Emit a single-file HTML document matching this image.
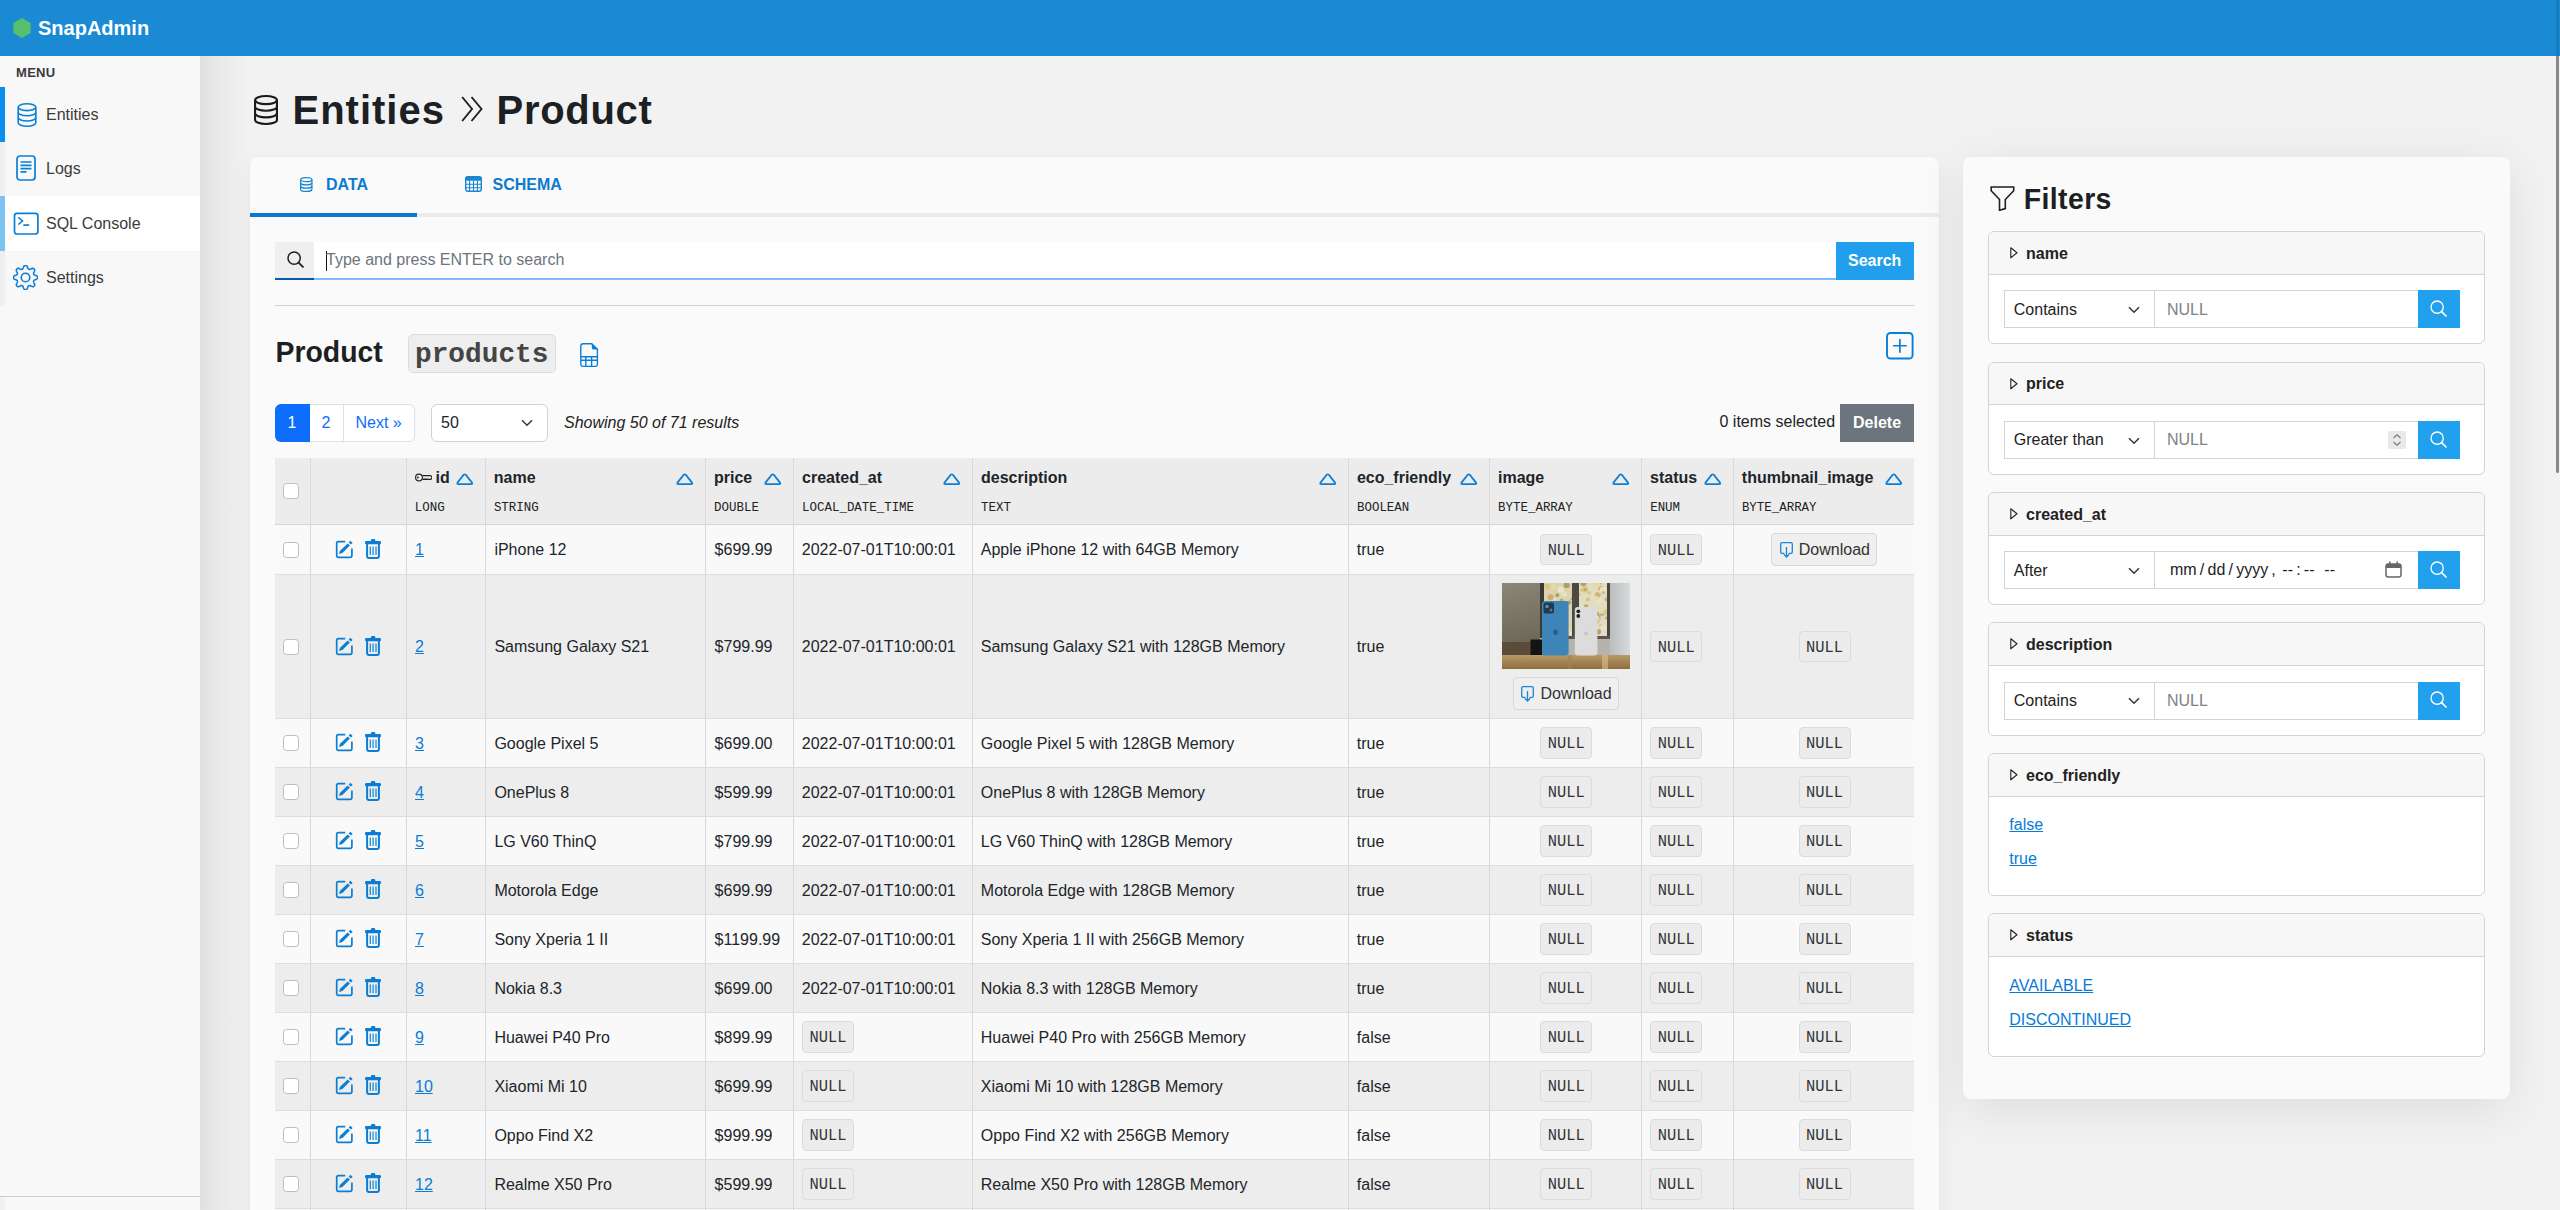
<!DOCTYPE html>
<html><head><meta charset="utf-8">
<style>
*{box-sizing:border-box;margin:0;padding:0}
html,body{width:2560px;height:1210px;overflow:hidden}
body{font-family:"Liberation Sans",sans-serif;font-size:16px;color:#212529;background:#f2f2f2;position:relative}
.abs{position:absolute}
svg{display:block}
.t{position:absolute;white-space:nowrap;line-height:20px}
#top{left:0;top:0;width:2560px;height:56px;background:#1a8ad4}
#logo-hex{left:13px;top:18px}
#logo-txt{left:38px;top:16px;color:#fff;font-weight:bold;font-size:20px;line-height:24px}
#side{left:0;top:56px;width:200px;height:1154px;background:#f8f8f8}
#menu{left:16px;top:9px;font-weight:bold;font-size:13px;color:#3a3a3a;letter-spacing:0.3px;line-height:15px}
.mi{position:absolute;left:0;width:200px;height:55px}
.mi .strip{position:absolute;left:0;top:0;width:5px;height:100%;background:#efefef}
.mi .lbl{position:absolute;left:46px;font-size:16px;color:#3b3b3b;line-height:20px}
.mi svg{position:absolute}
#shadowL{left:200px;top:56px;width:50px;height:1154px;background:linear-gradient(to right,#e0e0e0 0%,#e7e7e7 25%,#ebebeb 50%,#efefef 75%,#f2f2f2 100%)}
.card{position:absolute;background:#fafafa;border-radius:8px;box-shadow:0 0 2px rgba(0,0,0,0.05),0 8px 26px rgba(0,0,0,0.06)}
.blue{color:#0d7bd2}
.mono{font-family:"Liberation Mono",monospace}
.cell{position:absolute}
.badge{position:absolute;height:31.5px;border:1px solid #dcdcdc;border-radius:4px;background:#ececec;font-family:"Liberation Mono",monospace;font-size:15.4px;line-height:33.5px;color:#333;text-align:center}
.badge span{display:inline-block;transform:scaleY(1.1)}
.dl{position:absolute;height:33px;border:1px solid #d8d8d8;border-radius:4px;background:#efefef;font-size:16px;line-height:31px;color:#333}
.cb{position:absolute;width:16px;height:16px;border:1px solid #bdbdbd;border-radius:3.5px;background:#fff}
.fcard{position:absolute;left:25.6px;width:496px;border:1px solid #d6d6d6;border-radius:6px;background:#fff;overflow:hidden}
.fhead{position:absolute;left:0;top:0;width:100%;background:#f7f7f7;border-bottom:1px solid #d6d6d6}
.flbl{position:absolute;left:36px;font-weight:bold;font-size:16px;line-height:20px;color:#222}
.fsel{position:absolute;left:15px;width:151px;height:38px;border:1px solid #cfcfcf;background:#fff;font-size:16px;line-height:36px;padding-left:9px;color:#222}
.finp{position:absolute;left:165px;width:264px;height:38px;border:1px solid #cfcfcf;border-left:none;background:#fff;font-size:16px;line-height:36px;padding-left:12px;color:#7b8288}
.fbtn{position:absolute;left:429px;width:42px;height:38px;background:#1f9be8}
.flink{position:absolute;left:20px;font-size:16px;line-height:20px;color:#1a85d0;text-decoration:underline}
</style></head><body>
<div id="top" class="abs"></div>
<svg id="logo-hex" class="abs" width="18" height="20" viewBox="0 0 18 20"><path d="M9 0 L17.66 5 V15 L9 20 L0.34 15 V5 Z" fill="#55bf6a"/></svg>
<div id="logo-txt" class="abs">SnapAdmin</div>

<div id="shadowL" class="abs"></div>
<svg class="abs" style="left:254px;top:95px" width="24" height="30" viewBox="0 0 24 30"><g fill="none" stroke="#1b1b1b" stroke-width="2.1"><ellipse cx="12.0" cy="5.1000000000000005" rx="10.95" ry="4.050000000000001"/><path d="M1.05 5.1000000000000005V24.9A10.95 4.050000000000001 0 0 0 22.95 24.9V5.1000000000000005"/><path d="M1.05 11.7A10.95 4.050000000000001 0 0 0 22.95 11.7"/><path d="M1.05 18.299999999999997A10.95 4.050000000000001 0 0 0 22.95 18.299999999999997"/></g></svg>
<div class="t" style="left:292.50px;top:87.14px;font-size:40px;line-height:46px;font-weight:bold;color:#1c1f23;letter-spacing:1px">Entities</div>
<svg class="abs" style="left:461px;top:96px;" width="22" height="26" viewBox="0 0 22 26"><path d="M1.2 1 L11 13 L1.2 25 M10.5 1 L20.5 13 L10.5 25" fill="none" stroke="#1c1f23" stroke-width="1.9"/></svg>
<div class="t" style="left:496.50px;top:87.14px;font-size:40px;line-height:46px;font-weight:bold;color:#1c1f23;letter-spacing:0.7px">Product</div>
<div class="card" style="left:250px;top:157px;width:1689px;height:1100px"></div>
<div class="abs" style="left:250px;top:213px;width:1689px;height:4px;background:#ececec"></div>
<div class="abs" style="left:250px;top:213px;width:167px;height:4px;background:#0a78d0"></div>
<svg class="abs" style="left:300px;top:177px" width="12.5" height="15" viewBox="0 0 12.5 15"><g fill="none" stroke="#1a85d0" stroke-width="1.2"><ellipse cx="6.25" cy="2.6250000000000004" rx="5.65" ry="2.0250000000000004"/><path d="M0.6 2.6250000000000004V12.375A5.65 2.0250000000000004 0 0 0 11.9 12.375V2.6250000000000004"/><path d="M0.6 5.875A5.65 2.0250000000000004 0 0 0 11.9 5.875"/><path d="M0.6 9.125A5.65 2.0250000000000004 0 0 0 11.9 9.125"/></g></svg>
<div class="t" style="left:326.00px;top:174.76px;font-size:16px;line-height:20px;font-weight:bold;color:#0d7ad1">DATA</div>
<svg class="abs" style="left:464.5px;top:176px;" width="17" height="16" viewBox="0 0 17 16"><rect x="0.7" y="0.7" width="15.6" height="14.6" rx="2" fill="none" stroke="#1a85d0" stroke-width="1.4"/><rect x="0.7" y="0.7" width="15.6" height="4" rx="1.5" fill="#1a85d0"/><path d="M0.7 8.2H16.3M0.7 11.7H16.3M4.6 4.5V15.3M8.5 4.5V15.3M12.4 4.5V15.3" stroke="#1a85d0" stroke-width="1.1"/></svg>
<div class="t" style="left:492.50px;top:174.76px;font-size:16px;line-height:20px;font-weight:bold;color:#0d7ad1">SCHEMA</div>
<div class="abs" style="left:275px;top:242px;width:39px;height:38px;background:#efefef;border-bottom:2px solid #0b5aa8"></div>
<svg class="abs" style="left:286.5px;top:251px;" width="17" height="17" viewBox="0 0 17 17"><g fill="none" stroke="#222" stroke-width="1.5" stroke-linecap="round"><circle cx="7.14" cy="7.14" r="6.12"/><path d="M11.56 11.56L15.95 15.95" stroke-width="1.875"/></g></svg>
<div class="abs" style="left:314px;top:242px;width:1522px;height:38px;background:#fff;border-bottom:2px solid #86b7fe"></div>
<div class="abs" style="left:326px;top:251px;width:1px;height:20px;background:#111"></div>
<div class="t" style="left:326.00px;top:250.46px;font-size:16px;line-height:20px;color:#6c757d">Type and press ENTER to search</div>
<div class="abs" style="left:1836px;top:242px;width:78px;height:38px;background:#219fec"></div>
<div class="t" style="left:1848.00px;top:251.46px;font-size:16px;line-height:20px;color:#fff;font-weight:bold">Search</div>
<div class="abs" style="left:275px;top:305px;width:1639px;height:1px;background:#cfcfcf"></div>
<div class="t" style="left:275.50px;top:335.46px;font-size:28.4px;line-height:34px;font-weight:bold;color:#1c1f23;transform:scaleY(1.03);transform-origin:0 26.84px">Product</div>
<div class="abs" style="left:408px;top:334px;width:148px;height:38.5px;background:#eeeeee;border:1px solid #dcdcdc;border-radius:5px"></div>
<div class="t mono" style="left:415.00px;top:337.57px;font-size:27.8px;line-height:34px;font-weight:bold;color:#444">products</div>
<svg class="abs" style="left:580px;top:342.6px;" width="18.5" height="24.5" viewBox="0 0 18.5 24.5"><g fill="none" stroke="#0b7fd6" stroke-width="1.4"><path d="M3.2 0.8H11.8L17.4 6.4V21A2.4 2.4 0 0 1 15 23.4H3.2A2.4 2.4 0 0 1 0.8 21V3.2A2.4 2.4 0 0 1 3.2 0.8Z"/><path d="M0.8 13.7H17.4M0.8 17.2H17.4M5.8 13.7V23.4M11.6 13.7V23.4"/></g><path d="M11.8 0.8V4.7A1.7 1.7 0 0 0 13.5 6.4H17.4Z" fill="#0b7fd6"/></svg>
<svg class="abs" style="left:1886.3px;top:332.2px;" width="27.8" height="27.5" viewBox="0 0 27.8 27.5"><rect x="1" y="1" width="25.6" height="25.5" rx="3.5" fill="none" stroke="#0b7fd6" stroke-width="1.9"/><path d="M13.9 6.9V20.7M7 13.75H20.8" stroke="#0b7fd6" stroke-width="1.7"/></svg>
<div class="abs" style="left:275px;top:404px;width:140px;height:38px;border:1px solid #dee2e6;border-radius:6px;background:#fff"></div>
<div class="abs" style="left:275px;top:404px;width:35px;height:38px;border-radius:6px 0 0 6px;background:#0d6efd"></div>
<div class="abs" style="left:343px;top:404px;width:1px;height:38px;background:#dee2e6"></div>
<div class="t" style="left:287.50px;top:413.46px;font-size:16px;line-height:20px;color:#fff">1</div>
<div class="t" style="left:321.50px;top:413.46px;font-size:16px;line-height:20px;color:#0d6efd">2</div>
<div class="t" style="left:355.50px;top:413.46px;font-size:16px;line-height:20px;color:#0d6efd">Next »</div>
<div class="abs" style="left:431px;top:404px;width:117px;height:38px;border:1px solid #cfd3d7;border-radius:6px;background:#fff"></div>
<div class="t" style="left:441.00px;top:413.46px;font-size:16px;line-height:20px;">50</div>
<svg class="abs" style="left:521px;top:419.3px;" width="12" height="8" viewBox="0 0 12 8"><path d="M1 1.2L6 6.2L11 1.2" fill="none" stroke="#343a40" stroke-width="1.6"/></svg>
<div class="t" style="left:564.00px;top:413.46px;font-size:16px;line-height:20px;font-style:italic;color:#222">Showing 50 of 71 results</div>
<div class="t" style="left:1719.50px;top:411.96px;font-size:16px;line-height:20px;color:#222">0 items selected</div>
<div class="abs" style="left:1840px;top:404px;width:74px;height:38px;background:#6c757d"></div>
<div class="t" style="left:1853.00px;top:412.96px;font-size:16px;line-height:20px;color:#fff;font-weight:bold">Delete</div>
<div class="abs" style="left:275px;top:458px;width:1639px;height:67px;background:#ececec"></div>
<div class="abs" style="left:275px;top:525px;width:1639px;height:50px;background:#f9f9f9"></div>
<div class="abs" style="left:275px;top:575px;width:1639px;height:144px;background:#ededed"></div>
<div class="abs" style="left:275px;top:719px;width:1639px;height:49px;background:#f9f9f9"></div>
<div class="abs" style="left:275px;top:768px;width:1639px;height:49px;background:#ededed"></div>
<div class="abs" style="left:275px;top:817px;width:1639px;height:49px;background:#f9f9f9"></div>
<div class="abs" style="left:275px;top:866px;width:1639px;height:49px;background:#ededed"></div>
<div class="abs" style="left:275px;top:915px;width:1639px;height:49px;background:#f9f9f9"></div>
<div class="abs" style="left:275px;top:964px;width:1639px;height:49px;background:#ededed"></div>
<div class="abs" style="left:275px;top:1013px;width:1639px;height:49px;background:#f9f9f9"></div>
<div class="abs" style="left:275px;top:1062px;width:1639px;height:49px;background:#ededed"></div>
<div class="abs" style="left:275px;top:1111px;width:1639px;height:49px;background:#f9f9f9"></div>
<div class="abs" style="left:275px;top:1160px;width:1639px;height:49px;background:#ededed"></div>
<div class="abs" style="left:275px;top:1209px;width:1639px;height:49px;background:#f9f9f9"></div>
<div class="abs" style="left:275px;top:524px;width:1639px;height:1px;background:#d3d8dc"></div>
<div class="abs" style="left:275px;top:574px;width:1639px;height:1px;background:#dcdfe2"></div>
<div class="abs" style="left:275px;top:718px;width:1639px;height:1px;background:#dcdfe2"></div>
<div class="abs" style="left:275px;top:767px;width:1639px;height:1px;background:#dcdfe2"></div>
<div class="abs" style="left:275px;top:816px;width:1639px;height:1px;background:#dcdfe2"></div>
<div class="abs" style="left:275px;top:865px;width:1639px;height:1px;background:#dcdfe2"></div>
<div class="abs" style="left:275px;top:914px;width:1639px;height:1px;background:#dcdfe2"></div>
<div class="abs" style="left:275px;top:963px;width:1639px;height:1px;background:#dcdfe2"></div>
<div class="abs" style="left:275px;top:1012px;width:1639px;height:1px;background:#dcdfe2"></div>
<div class="abs" style="left:275px;top:1061px;width:1639px;height:1px;background:#dcdfe2"></div>
<div class="abs" style="left:275px;top:1110px;width:1639px;height:1px;background:#dcdfe2"></div>
<div class="abs" style="left:275px;top:1159px;width:1639px;height:1px;background:#dcdfe2"></div>
<div class="abs" style="left:275px;top:1208px;width:1639px;height:1px;background:#dcdfe2"></div>
<div class="abs" style="left:275px;top:1257px;width:1639px;height:1px;background:#dcdfe2"></div>
<div class="abs" style="left:309.9px;top:458px;width:1px;height:800px;background:#d9d9d9"></div>
<div class="abs" style="left:405.7px;top:458px;width:1px;height:800px;background:#d9d9d9"></div>
<div class="abs" style="left:484.8px;top:458px;width:1px;height:800px;background:#d9d9d9"></div>
<div class="abs" style="left:705.0px;top:458px;width:1px;height:800px;background:#d9d9d9"></div>
<div class="abs" style="left:793.0px;top:458px;width:1px;height:800px;background:#d9d9d9"></div>
<div class="abs" style="left:972.0px;top:458px;width:1px;height:800px;background:#d9d9d9"></div>
<div class="abs" style="left:1347.9px;top:458px;width:1px;height:800px;background:#d9d9d9"></div>
<div class="abs" style="left:1489.0px;top:458px;width:1px;height:800px;background:#d9d9d9"></div>
<div class="abs" style="left:1641.1px;top:458px;width:1px;height:800px;background:#d9d9d9"></div>
<div class="abs" style="left:1732.8px;top:458px;width:1px;height:800px;background:#d9d9d9"></div>
<div class="cb" style="left:283px;top:483px"></div>
<svg class="abs" style="left:415px;top:472.5px;" width="17" height="9" viewBox="0 0 17 9"><g fill="none" stroke="#222" stroke-width="1.15"><circle cx="4" cy="4.5" r="3.4"/><path d="M7.4 2.6H15A1.9 1.9 0 0 1 15 6.4H7.4"/></g><circle cx="2.9" cy="4.5" r="0.9" fill="#222"/><path d="M9 5.2V6.2M10.6 5.2V6.2M12.2 5.2V6.2" stroke="#222" stroke-width="0.6"/></svg>
<div class="t" style="left:435.50px;top:468.06px;font-size:16px;line-height:20px;font-weight:bold">id</div>
<svg class="abs" style="left:455.8px;top:473px;" width="17.5" height="12.5" viewBox="0 0 17.5 12.5"><path d="M7.6 1.9Q8.75 0.6 9.9 1.9L16 9.6Q16.8 11.1 15.2 11.1H2.3Q0.7 11.1 1.5 9.6Z" fill="none" stroke="#0b7fd6" stroke-width="1.7" stroke-linejoin="round"/></svg>
<div class="t mono" style="left:414.80px;top:497.69px;font-size:12.45px;line-height:20px;color:#222">LONG</div>
<div class="t" style="left:493.80px;top:468.06px;font-size:16px;line-height:20px;font-weight:bold">name</div>
<svg class="abs" style="left:676.0px;top:473px;" width="17.5" height="12.5" viewBox="0 0 17.5 12.5"><path d="M7.6 1.9Q8.75 0.6 9.9 1.9L16 9.6Q16.8 11.1 15.2 11.1H2.3Q0.7 11.1 1.5 9.6Z" fill="none" stroke="#0b7fd6" stroke-width="1.7" stroke-linejoin="round"/></svg>
<div class="t mono" style="left:493.90px;top:497.69px;font-size:12.45px;line-height:20px;color:#222">STRING</div>
<div class="t" style="left:714.00px;top:468.06px;font-size:16px;line-height:20px;font-weight:bold">price</div>
<svg class="abs" style="left:764.0px;top:473px;" width="17.5" height="12.5" viewBox="0 0 17.5 12.5"><path d="M7.6 1.9Q8.75 0.6 9.9 1.9L16 9.6Q16.8 11.1 15.2 11.1H2.3Q0.7 11.1 1.5 9.6Z" fill="none" stroke="#0b7fd6" stroke-width="1.7" stroke-linejoin="round"/></svg>
<div class="t mono" style="left:714.10px;top:497.69px;font-size:12.45px;line-height:20px;color:#222">DOUBLE</div>
<div class="t" style="left:802.00px;top:468.06px;font-size:16px;line-height:20px;font-weight:bold">created_at</div>
<svg class="abs" style="left:943.0px;top:473px;" width="17.5" height="12.5" viewBox="0 0 17.5 12.5"><path d="M7.6 1.9Q8.75 0.6 9.9 1.9L16 9.6Q16.8 11.1 15.2 11.1H2.3Q0.7 11.1 1.5 9.6Z" fill="none" stroke="#0b7fd6" stroke-width="1.7" stroke-linejoin="round"/></svg>
<div class="t mono" style="left:802.10px;top:497.69px;font-size:12.45px;line-height:20px;color:#222">LOCAL_DATE_TIME</div>
<div class="t" style="left:981.00px;top:468.06px;font-size:16px;line-height:20px;font-weight:bold">description</div>
<svg class="abs" style="left:1318.9px;top:473px;" width="17.5" height="12.5" viewBox="0 0 17.5 12.5"><path d="M7.6 1.9Q8.75 0.6 9.9 1.9L16 9.6Q16.8 11.1 15.2 11.1H2.3Q0.7 11.1 1.5 9.6Z" fill="none" stroke="#0b7fd6" stroke-width="1.7" stroke-linejoin="round"/></svg>
<div class="t mono" style="left:981.10px;top:497.69px;font-size:12.45px;line-height:20px;color:#222">TEXT</div>
<div class="t" style="left:1356.90px;top:468.06px;font-size:16px;line-height:20px;font-weight:bold">eco_friendly</div>
<svg class="abs" style="left:1460.0px;top:473px;" width="17.5" height="12.5" viewBox="0 0 17.5 12.5"><path d="M7.6 1.9Q8.75 0.6 9.9 1.9L16 9.6Q16.8 11.1 15.2 11.1H2.3Q0.7 11.1 1.5 9.6Z" fill="none" stroke="#0b7fd6" stroke-width="1.7" stroke-linejoin="round"/></svg>
<div class="t mono" style="left:1357.00px;top:497.69px;font-size:12.45px;line-height:20px;color:#222">BOOLEAN</div>
<div class="t" style="left:1498.00px;top:468.06px;font-size:16px;line-height:20px;font-weight:bold">image</div>
<svg class="abs" style="left:1612.1px;top:473px;" width="17.5" height="12.5" viewBox="0 0 17.5 12.5"><path d="M7.6 1.9Q8.75 0.6 9.9 1.9L16 9.6Q16.8 11.1 15.2 11.1H2.3Q0.7 11.1 1.5 9.6Z" fill="none" stroke="#0b7fd6" stroke-width="1.7" stroke-linejoin="round"/></svg>
<div class="t mono" style="left:1498.10px;top:497.69px;font-size:12.45px;line-height:20px;color:#222">BYTE_ARRAY</div>
<div class="t" style="left:1650.10px;top:468.06px;font-size:16px;line-height:20px;font-weight:bold">status</div>
<svg class="abs" style="left:1703.8px;top:473px;" width="17.5" height="12.5" viewBox="0 0 17.5 12.5"><path d="M7.6 1.9Q8.75 0.6 9.9 1.9L16 9.6Q16.8 11.1 15.2 11.1H2.3Q0.7 11.1 1.5 9.6Z" fill="none" stroke="#0b7fd6" stroke-width="1.7" stroke-linejoin="round"/></svg>
<div class="t mono" style="left:1650.20px;top:497.69px;font-size:12.45px;line-height:20px;color:#222">ENUM</div>
<div class="t" style="left:1741.80px;top:468.06px;font-size:16px;line-height:20px;font-weight:bold">thumbnail_image</div>
<svg class="abs" style="left:1884.5px;top:473px;" width="17.5" height="12.5" viewBox="0 0 17.5 12.5"><path d="M7.6 1.9Q8.75 0.6 9.9 1.9L16 9.6Q16.8 11.1 15.2 11.1H2.3Q0.7 11.1 1.5 9.6Z" fill="none" stroke="#0b7fd6" stroke-width="1.7" stroke-linejoin="round"/></svg>
<div class="t mono" style="left:1741.90px;top:497.69px;font-size:12.45px;line-height:20px;color:#222">BYTE_ARRAY</div>
<div class="cb" style="left:283px;top:541.5px"></div>
<svg class="abs" style="left:335px;top:539.9px;" width="19" height="19" viewBox="0 0 19 19"><path d="M10.2 1.6H3.4A1.7 1.7 0 0 0 1.7 3.3V15.6A1.7 1.7 0 0 0 3.4 17.3H15.2A1.7 1.7 0 0 0 16.9 15.6V8.4" fill="none" stroke="#0b7dd4" stroke-width="1.7"/><path d="M3.9 14.1L5 10.7L12.7 3.4L14.9 5.6L7.4 13Z" fill="#0b7dd4"/><path d="M13.7 2.4L15.4 0.7L17.6 2.9L15.9 4.6Z" fill="#0b7dd4"/></svg>
<svg class="abs" style="left:365px;top:538.9px;" width="16" height="20" viewBox="0 0 16 20"><g fill="#0b7dd4"><rect x="0" y="2.1" width="16" height="3.1" rx="1.2"/><rect x="5.9" y="0.1" width="4.4" height="2.8" rx="1.3"/></g><path d="M2.1 5V17A2 2 0 0 0 4.1 19H11.9A2 2 0 0 0 13.9 17V5" fill="none" stroke="#0b7dd4" stroke-width="2"/><path d="M5.3 7.6V15.9M8.1 7.6V15.9M11 7.6V15.9" stroke="#1a8edc" stroke-width="1.3"/></svg>
<div class="t" style="left:415.00px;top:539.66px;font-size:16px;line-height:20px;color:#0a7bd5;text-decoration:underline">1</div>
<div class="t" style="left:494.40px;top:539.66px;font-size:16px;line-height:20px;">iPhone 12</div>
<div class="t" style="left:714.60px;top:539.66px;font-size:16px;line-height:20px;">$699.99</div>
<div class="t" style="left:801.80px;top:539.66px;font-size:16px;line-height:20px;">2022-07-01T10:00:01</div>
<div class="t" style="left:980.80px;top:539.66px;font-size:16px;line-height:20px;">Apple iPhone 12 with 64GB Memory</div>
<div class="t" style="left:1356.80px;top:539.66px;font-size:16px;line-height:20px;">true</div>
<div class="badge" style="left:1540.2px;top:533.5px;width:52px"><span>NULL</span></div>
<div class="badge" style="left:1650.3px;top:533.5px;width:52px"><span>NULL</span></div>
<div class="dl" style="left:1771.3px;top:533.0px;width:105.5px"></div><svg class="abs" style="left:1779.6px;top:542.0px;" width="13" height="17" viewBox="0 0 13 17"><g fill="none" stroke="#1a85d0" stroke-width="1.3"><path d="M4.3 11.3H2A1.3 1.3 0 0 1 0.7 10V2A1.3 1.3 0 0 1 2 0.7H11A1.3 1.3 0 0 1 12.3 2V10A1.3 1.3 0 0 1 11 11.3H8.7"/><path d="M6.5 5V15M3.8 12.3L6.5 15L9.2 12.3"/></g></svg><div class="t" style="left:1798.80px;top:539.66px;font-size:16px;line-height:20px;color:#333">Download</div>
<div class="cb" style="left:283px;top:638.5px"></div>
<svg class="abs" style="left:335px;top:636.9px;" width="19" height="19" viewBox="0 0 19 19"><path d="M10.2 1.6H3.4A1.7 1.7 0 0 0 1.7 3.3V15.6A1.7 1.7 0 0 0 3.4 17.3H15.2A1.7 1.7 0 0 0 16.9 15.6V8.4" fill="none" stroke="#0b7dd4" stroke-width="1.7"/><path d="M3.9 14.1L5 10.7L12.7 3.4L14.9 5.6L7.4 13Z" fill="#0b7dd4"/><path d="M13.7 2.4L15.4 0.7L17.6 2.9L15.9 4.6Z" fill="#0b7dd4"/></svg>
<svg class="abs" style="left:365px;top:635.9px;" width="16" height="20" viewBox="0 0 16 20"><g fill="#0b7dd4"><rect x="0" y="2.1" width="16" height="3.1" rx="1.2"/><rect x="5.9" y="0.1" width="4.4" height="2.8" rx="1.3"/></g><path d="M2.1 5V17A2 2 0 0 0 4.1 19H11.9A2 2 0 0 0 13.9 17V5" fill="none" stroke="#0b7dd4" stroke-width="2"/><path d="M5.3 7.6V15.9M8.1 7.6V15.9M11 7.6V15.9" stroke="#1a8edc" stroke-width="1.3"/></svg>
<div class="t" style="left:415.00px;top:636.66px;font-size:16px;line-height:20px;color:#0a7bd5;text-decoration:underline">2</div>
<div class="t" style="left:494.40px;top:636.66px;font-size:16px;line-height:20px;">Samsung Galaxy S21</div>
<div class="t" style="left:714.60px;top:636.66px;font-size:16px;line-height:20px;">$799.99</div>
<div class="t" style="left:801.80px;top:636.66px;font-size:16px;line-height:20px;">2022-07-01T10:00:01</div>
<div class="t" style="left:980.80px;top:636.66px;font-size:16px;line-height:20px;">Samsung Galaxy S21 with 128GB Memory</div>
<div class="t" style="left:1356.80px;top:636.66px;font-size:16px;line-height:20px;">true</div>
<svg class="abs" style="left:1502px;top:583px;" width="128" height="86" viewBox="0 0 128 86">
<defs><linearGradient id="lw" x1="0" y1="0" x2="0.4" y2="1"><stop offset="0" stop-color="#8b8676"/><stop offset="1" stop-color="#5f584b"/></linearGradient>
<linearGradient id="tab" x1="0" y1="0" x2="0" y2="1"><stop offset="0" stop-color="#b89a68"/><stop offset="1" stop-color="#8e6c3e"/></linearGradient>
<linearGradient id="rw" x1="0" y1="0" x2="1" y2="0"><stop offset="0" stop-color="#b9bdbd"/><stop offset="1" stop-color="#d6dadc"/></linearGradient>
<clipPath id="p1"><rect x="42" y="0" width="28" height="53"/><rect x="77" y="0" width="28" height="53"/></clipPath></defs>
<rect width="128" height="86" fill="url(#lw)"/>
<rect x="38" y="0" width="70" height="72" fill="#b4b4ac"/>
<rect x="42" y="0" width="28" height="53" fill="#dcd3b0"/>
<rect x="77" y="0" width="28" height="53" fill="#e2dcc0"/>
<g clip-path="url(#p1)"><circle cx="58.6" cy="6.8" r="3.0" fill="#f2ecd8" opacity="0.75"/><circle cx="59.0" cy="47.3" r="2.1" fill="#9c8f52" opacity="0.75"/><circle cx="47.4" cy="37.3" r="2.3" fill="#9c8f52" opacity="0.75"/><circle cx="88.1" cy="44.8" r="1.7" fill="#c9a25a" opacity="0.75"/><circle cx="97.8" cy="34.9" r="1.3" fill="#e8d9a8" opacity="0.75"/><circle cx="98.8" cy="42.8" r="1.7" fill="#d8b46a" opacity="0.75"/><circle cx="88.1" cy="41.6" r="2.1" fill="#c9a25a" opacity="0.75"/><circle cx="79.7" cy="7.1" r="1.6" fill="#d8b46a" opacity="0.75"/><circle cx="88.8" cy="43.3" r="2.3" fill="#9c8f52" opacity="0.75"/><circle cx="93.4" cy="47.0" r="2.6" fill="#e8d9a8" opacity="0.75"/><circle cx="104.7" cy="34.9" r="1.5" fill="#a8a05a" opacity="0.75"/><circle cx="62.0" cy="11.0" r="2.9" fill="#e9e4cf" opacity="0.75"/><circle cx="80.5" cy="25.1" r="2.5" fill="#f2ecd8" opacity="0.75"/><circle cx="51.6" cy="3.5" r="3.0" fill="#e8d9a8" opacity="0.75"/><circle cx="89.0" cy="21.6" r="1.4" fill="#e8d9a8" opacity="0.75"/><circle cx="97.1" cy="17.2" r="3.0" fill="#e9e4cf" opacity="0.75"/><circle cx="70.0" cy="16.1" r="1.4" fill="#9c8f52" opacity="0.75"/><circle cx="68.6" cy="50.5" r="1.8" fill="#e9e4cf" opacity="0.75"/><circle cx="61.3" cy="51.0" r="1.9" fill="#a8a05a" opacity="0.75"/><circle cx="67.1" cy="19.6" r="2.1" fill="#9c8f52" opacity="0.75"/><circle cx="95.0" cy="31.0" r="2.3" fill="#9c8f52" opacity="0.75"/><circle cx="89.1" cy="37.5" r="1.7" fill="#e9e4cf" opacity="0.75"/><circle cx="104.4" cy="27.1" r="2.3" fill="#e8d9a8" opacity="0.75"/><circle cx="104.6" cy="16.4" r="2.0" fill="#c9a25a" opacity="0.75"/><circle cx="59.7" cy="17.3" r="1.9" fill="#a8a05a" opacity="0.75"/><circle cx="97.7" cy="1.2" r="1.3" fill="#e8d9a8" opacity="0.75"/><circle cx="84.0" cy="23.7" r="2.4" fill="#a8a05a" opacity="0.75"/><circle cx="52.2" cy="16.3" r="1.9" fill="#e9e4cf" opacity="0.75"/><circle cx="99.0" cy="5.5" r="2.8" fill="#c9a25a" opacity="0.75"/><circle cx="91.0" cy="34.0" r="1.7" fill="#a8a05a" opacity="0.75"/><circle cx="61.0" cy="33.8" r="1.4" fill="#a8a05a" opacity="0.75"/><circle cx="95.9" cy="11.7" r="2.8" fill="#c9a25a" opacity="0.75"/><circle cx="51.4" cy="33.8" r="3.0" fill="#f2ecd8" opacity="0.75"/><circle cx="83.3" cy="6.3" r="2.3" fill="#bfb27a" opacity="0.75"/><circle cx="99.6" cy="43.6" r="1.6" fill="#e9e4cf" opacity="0.75"/><circle cx="99.6" cy="33.4" r="2.8" fill="#a8a05a" opacity="0.75"/><circle cx="53.8" cy="27.0" r="2.9" fill="#f2ecd8" opacity="0.75"/><circle cx="94.8" cy="15.1" r="2.3" fill="#e8d9a8" opacity="0.75"/><circle cx="81.4" cy="0.2" r="3.1" fill="#9c8f52" opacity="0.75"/><circle cx="92.6" cy="51.3" r="2.6" fill="#e8d9a8" opacity="0.75"/><circle cx="100.4" cy="34.5" r="2.2" fill="#e9e4cf" opacity="0.75"/><circle cx="101.9" cy="44.8" r="2.9" fill="#e9e4cf" opacity="0.75"/><circle cx="64.7" cy="2.3" r="3.0" fill="#9c8f52" opacity="0.75"/><circle cx="67.1" cy="46.8" r="2.4" fill="#e8d9a8" opacity="0.75"/><circle cx="97.9" cy="8.9" r="1.8" fill="#e8d9a8" opacity="0.75"/><circle cx="78.5" cy="47.5" r="1.4" fill="#c9a25a" opacity="0.75"/><circle cx="104.2" cy="28.1" r="2.8" fill="#e8d9a8" opacity="0.75"/><circle cx="83.2" cy="6.4" r="3.0" fill="#d9c27a" opacity="0.75"/><circle cx="48.7" cy="14.2" r="3.0" fill="#c9a25a" opacity="0.75"/><circle cx="55.7" cy="29.7" r="2.0" fill="#e9e4cf" opacity="0.75"/><circle cx="49.5" cy="27.4" r="2.0" fill="#f2ecd8" opacity="0.75"/><circle cx="98.7" cy="0.1" r="1.3" fill="#c9a25a" opacity="0.75"/><circle cx="45.5" cy="3.6" r="3.1" fill="#d9c27a" opacity="0.75"/><circle cx="85.8" cy="16.4" r="1.9" fill="#d8b46a" opacity="0.75"/><circle cx="87.1" cy="9.9" r="1.9" fill="#d9c27a" opacity="0.75"/><circle cx="57.6" cy="37.2" r="2.0" fill="#d9c27a" opacity="0.75"/><circle cx="43.2" cy="24.0" r="2.5" fill="#9c8f52" opacity="0.75"/><circle cx="94.8" cy="2.3" r="3.0" fill="#e8d9a8" opacity="0.75"/><circle cx="94.6" cy="39.5" r="1.8" fill="#d8b46a" opacity="0.75"/><circle cx="77.5" cy="11.4" r="1.7" fill="#d9c27a" opacity="0.75"/><circle cx="83.3" cy="6.8" r="1.3" fill="#a8a05a" opacity="0.75"/><circle cx="104.1" cy="29.1" r="2.9" fill="#d9c27a" opacity="0.75"/><circle cx="96.3" cy="48.8" r="2.7" fill="#9c8f52" opacity="0.75"/><circle cx="95.7" cy="38.2" r="2.3" fill="#d9c27a" opacity="0.75"/><circle cx="55.3" cy="12.3" r="2.0" fill="#9c8f52" opacity="0.75"/><circle cx="57.8" cy="34.3" r="2.0" fill="#e8d9a8" opacity="0.75"/><circle cx="100.6" cy="6.3" r="2.9" fill="#f2ecd8" opacity="0.75"/><circle cx="93.2" cy="41.5" r="1.3" fill="#9c8f52" opacity="0.75"/><circle cx="45.0" cy="38.9" r="3.1" fill="#e8d9a8" opacity="0.75"/><circle cx="101.3" cy="9.4" r="1.4" fill="#c9a25a" opacity="0.75"/></g>
<rect x="38" y="0" width="4" height="55" fill="#3d3a36"/>
<rect x="70" y="0" width="7" height="55" fill="#4d4942"/>
<rect x="105" y="0" width="3" height="55" fill="#4a4640"/>
<rect x="40" y="53" width="68" height="3" fill="#595650"/>
<rect x="108" y="0" width="20" height="72" fill="url(#rw)"/>
<rect x="0" y="59" width="30" height="13" fill="#5b4b3b"/>
<rect x="28.5" y="56.5" width="12" height="16" fill="#141414"/>
<rect x="0" y="72" width="128" height="14" fill="url(#tab)"/>
<rect x="100" y="72" width="6" height="14" fill="#d8c28c" opacity="0.6"/>
<rect x="66" y="72" width="4" height="14" fill="#a0844f" opacity="0.6"/>
<rect x="40" y="18" width="26.6" height="54.4" rx="3" fill="#3d84b8"/>
<rect x="41.5" y="19.5" width="10.5" height="11" rx="2" fill="#1f3b52"/>
<circle cx="45" cy="23.5" r="1.7" fill="#6f8ea8"/><circle cx="49" cy="27" r="1.5" fill="#5a7a94"/>
<path d="M53.5 46.5c-1.3 0-2.3 1.3-2.3 2.8s1 2.8 2.3 2.8 2.3-1.3 2.3-2.8-1-2.8-2.3-2.8z" fill="#2a5e88"/>
<rect x="72.8" y="24" width="22.6" height="48.4" rx="3" fill="#dcdcdc"/>
<circle cx="76.3" cy="28.3" r="1.9" fill="#222"/><circle cx="76.3" cy="33" r="1.9" fill="#222"/>
<circle cx="84" cy="50.5" r="2" fill="#c8c8c8"/>
</svg>
<div class="dl" style="left:1513.0px;top:677.0px;width:105.5px"></div><svg class="abs" style="left:1521.3px;top:686.0px;" width="13" height="17" viewBox="0 0 13 17"><g fill="none" stroke="#1a85d0" stroke-width="1.3"><path d="M4.3 11.3H2A1.3 1.3 0 0 1 0.7 10V2A1.3 1.3 0 0 1 2 0.7H11A1.3 1.3 0 0 1 12.3 2V10A1.3 1.3 0 0 1 11 11.3H8.7"/><path d="M6.5 5V15M3.8 12.3L6.5 15L9.2 12.3"/></g></svg><div class="t" style="left:1540.50px;top:683.66px;font-size:16px;line-height:20px;color:#333">Download</div>
<div class="badge" style="left:1650.3px;top:630.5px;width:52px"><span>NULL</span></div>
<div class="badge" style="left:1798.5px;top:630.5px;width:52px"><span>NULL</span></div>
<div class="cb" style="left:283px;top:735.0px"></div>
<svg class="abs" style="left:335px;top:733.4px;" width="19" height="19" viewBox="0 0 19 19"><path d="M10.2 1.6H3.4A1.7 1.7 0 0 0 1.7 3.3V15.6A1.7 1.7 0 0 0 3.4 17.3H15.2A1.7 1.7 0 0 0 16.9 15.6V8.4" fill="none" stroke="#0b7dd4" stroke-width="1.7"/><path d="M3.9 14.1L5 10.7L12.7 3.4L14.9 5.6L7.4 13Z" fill="#0b7dd4"/><path d="M13.7 2.4L15.4 0.7L17.6 2.9L15.9 4.6Z" fill="#0b7dd4"/></svg>
<svg class="abs" style="left:365px;top:732.4px;" width="16" height="20" viewBox="0 0 16 20"><g fill="#0b7dd4"><rect x="0" y="2.1" width="16" height="3.1" rx="1.2"/><rect x="5.9" y="0.1" width="4.4" height="2.8" rx="1.3"/></g><path d="M2.1 5V17A2 2 0 0 0 4.1 19H11.9A2 2 0 0 0 13.9 17V5" fill="none" stroke="#0b7dd4" stroke-width="2"/><path d="M5.3 7.6V15.9M8.1 7.6V15.9M11 7.6V15.9" stroke="#1a8edc" stroke-width="1.3"/></svg>
<div class="t" style="left:415.00px;top:734.16px;font-size:16px;line-height:20px;color:#0a7bd5;text-decoration:underline">3</div>
<div class="t" style="left:494.40px;top:734.16px;font-size:16px;line-height:20px;">Google Pixel 5</div>
<div class="t" style="left:714.60px;top:734.16px;font-size:16px;line-height:20px;">$699.00</div>
<div class="t" style="left:801.80px;top:734.16px;font-size:16px;line-height:20px;">2022-07-01T10:00:01</div>
<div class="t" style="left:980.80px;top:734.16px;font-size:16px;line-height:20px;">Google Pixel 5 with 128GB Memory</div>
<div class="t" style="left:1356.80px;top:734.16px;font-size:16px;line-height:20px;">true</div>
<div class="badge" style="left:1540.2px;top:727.0px;width:52px"><span>NULL</span></div>
<div class="badge" style="left:1650.3px;top:727.0px;width:52px"><span>NULL</span></div>
<div class="badge" style="left:1798.5px;top:727.0px;width:52px"><span>NULL</span></div>
<div class="cb" style="left:283px;top:784.0px"></div>
<svg class="abs" style="left:335px;top:782.4px;" width="19" height="19" viewBox="0 0 19 19"><path d="M10.2 1.6H3.4A1.7 1.7 0 0 0 1.7 3.3V15.6A1.7 1.7 0 0 0 3.4 17.3H15.2A1.7 1.7 0 0 0 16.9 15.6V8.4" fill="none" stroke="#0b7dd4" stroke-width="1.7"/><path d="M3.9 14.1L5 10.7L12.7 3.4L14.9 5.6L7.4 13Z" fill="#0b7dd4"/><path d="M13.7 2.4L15.4 0.7L17.6 2.9L15.9 4.6Z" fill="#0b7dd4"/></svg>
<svg class="abs" style="left:365px;top:781.4px;" width="16" height="20" viewBox="0 0 16 20"><g fill="#0b7dd4"><rect x="0" y="2.1" width="16" height="3.1" rx="1.2"/><rect x="5.9" y="0.1" width="4.4" height="2.8" rx="1.3"/></g><path d="M2.1 5V17A2 2 0 0 0 4.1 19H11.9A2 2 0 0 0 13.9 17V5" fill="none" stroke="#0b7dd4" stroke-width="2"/><path d="M5.3 7.6V15.9M8.1 7.6V15.9M11 7.6V15.9" stroke="#1a8edc" stroke-width="1.3"/></svg>
<div class="t" style="left:415.00px;top:783.16px;font-size:16px;line-height:20px;color:#0a7bd5;text-decoration:underline">4</div>
<div class="t" style="left:494.40px;top:783.16px;font-size:16px;line-height:20px;">OnePlus 8</div>
<div class="t" style="left:714.60px;top:783.16px;font-size:16px;line-height:20px;">$599.99</div>
<div class="t" style="left:801.80px;top:783.16px;font-size:16px;line-height:20px;">2022-07-01T10:00:01</div>
<div class="t" style="left:980.80px;top:783.16px;font-size:16px;line-height:20px;">OnePlus 8 with 128GB Memory</div>
<div class="t" style="left:1356.80px;top:783.16px;font-size:16px;line-height:20px;">true</div>
<div class="badge" style="left:1540.2px;top:776.0px;width:52px"><span>NULL</span></div>
<div class="badge" style="left:1650.3px;top:776.0px;width:52px"><span>NULL</span></div>
<div class="badge" style="left:1798.5px;top:776.0px;width:52px"><span>NULL</span></div>
<div class="cb" style="left:283px;top:833.0px"></div>
<svg class="abs" style="left:335px;top:831.4px;" width="19" height="19" viewBox="0 0 19 19"><path d="M10.2 1.6H3.4A1.7 1.7 0 0 0 1.7 3.3V15.6A1.7 1.7 0 0 0 3.4 17.3H15.2A1.7 1.7 0 0 0 16.9 15.6V8.4" fill="none" stroke="#0b7dd4" stroke-width="1.7"/><path d="M3.9 14.1L5 10.7L12.7 3.4L14.9 5.6L7.4 13Z" fill="#0b7dd4"/><path d="M13.7 2.4L15.4 0.7L17.6 2.9L15.9 4.6Z" fill="#0b7dd4"/></svg>
<svg class="abs" style="left:365px;top:830.4px;" width="16" height="20" viewBox="0 0 16 20"><g fill="#0b7dd4"><rect x="0" y="2.1" width="16" height="3.1" rx="1.2"/><rect x="5.9" y="0.1" width="4.4" height="2.8" rx="1.3"/></g><path d="M2.1 5V17A2 2 0 0 0 4.1 19H11.9A2 2 0 0 0 13.9 17V5" fill="none" stroke="#0b7dd4" stroke-width="2"/><path d="M5.3 7.6V15.9M8.1 7.6V15.9M11 7.6V15.9" stroke="#1a8edc" stroke-width="1.3"/></svg>
<div class="t" style="left:415.00px;top:832.16px;font-size:16px;line-height:20px;color:#0a7bd5;text-decoration:underline">5</div>
<div class="t" style="left:494.40px;top:832.16px;font-size:16px;line-height:20px;">LG V60 ThinQ</div>
<div class="t" style="left:714.60px;top:832.16px;font-size:16px;line-height:20px;">$799.99</div>
<div class="t" style="left:801.80px;top:832.16px;font-size:16px;line-height:20px;">2022-07-01T10:00:01</div>
<div class="t" style="left:980.80px;top:832.16px;font-size:16px;line-height:20px;">LG V60 ThinQ with 128GB Memory</div>
<div class="t" style="left:1356.80px;top:832.16px;font-size:16px;line-height:20px;">true</div>
<div class="badge" style="left:1540.2px;top:825.0px;width:52px"><span>NULL</span></div>
<div class="badge" style="left:1650.3px;top:825.0px;width:52px"><span>NULL</span></div>
<div class="badge" style="left:1798.5px;top:825.0px;width:52px"><span>NULL</span></div>
<div class="cb" style="left:283px;top:882.0px"></div>
<svg class="abs" style="left:335px;top:880.4px;" width="19" height="19" viewBox="0 0 19 19"><path d="M10.2 1.6H3.4A1.7 1.7 0 0 0 1.7 3.3V15.6A1.7 1.7 0 0 0 3.4 17.3H15.2A1.7 1.7 0 0 0 16.9 15.6V8.4" fill="none" stroke="#0b7dd4" stroke-width="1.7"/><path d="M3.9 14.1L5 10.7L12.7 3.4L14.9 5.6L7.4 13Z" fill="#0b7dd4"/><path d="M13.7 2.4L15.4 0.7L17.6 2.9L15.9 4.6Z" fill="#0b7dd4"/></svg>
<svg class="abs" style="left:365px;top:879.4px;" width="16" height="20" viewBox="0 0 16 20"><g fill="#0b7dd4"><rect x="0" y="2.1" width="16" height="3.1" rx="1.2"/><rect x="5.9" y="0.1" width="4.4" height="2.8" rx="1.3"/></g><path d="M2.1 5V17A2 2 0 0 0 4.1 19H11.9A2 2 0 0 0 13.9 17V5" fill="none" stroke="#0b7dd4" stroke-width="2"/><path d="M5.3 7.6V15.9M8.1 7.6V15.9M11 7.6V15.9" stroke="#1a8edc" stroke-width="1.3"/></svg>
<div class="t" style="left:415.00px;top:881.16px;font-size:16px;line-height:20px;color:#0a7bd5;text-decoration:underline">6</div>
<div class="t" style="left:494.40px;top:881.16px;font-size:16px;line-height:20px;">Motorola Edge</div>
<div class="t" style="left:714.60px;top:881.16px;font-size:16px;line-height:20px;">$699.99</div>
<div class="t" style="left:801.80px;top:881.16px;font-size:16px;line-height:20px;">2022-07-01T10:00:01</div>
<div class="t" style="left:980.80px;top:881.16px;font-size:16px;line-height:20px;">Motorola Edge with 128GB Memory</div>
<div class="t" style="left:1356.80px;top:881.16px;font-size:16px;line-height:20px;">true</div>
<div class="badge" style="left:1540.2px;top:874.0px;width:52px"><span>NULL</span></div>
<div class="badge" style="left:1650.3px;top:874.0px;width:52px"><span>NULL</span></div>
<div class="badge" style="left:1798.5px;top:874.0px;width:52px"><span>NULL</span></div>
<div class="cb" style="left:283px;top:931.0px"></div>
<svg class="abs" style="left:335px;top:929.4px;" width="19" height="19" viewBox="0 0 19 19"><path d="M10.2 1.6H3.4A1.7 1.7 0 0 0 1.7 3.3V15.6A1.7 1.7 0 0 0 3.4 17.3H15.2A1.7 1.7 0 0 0 16.9 15.6V8.4" fill="none" stroke="#0b7dd4" stroke-width="1.7"/><path d="M3.9 14.1L5 10.7L12.7 3.4L14.9 5.6L7.4 13Z" fill="#0b7dd4"/><path d="M13.7 2.4L15.4 0.7L17.6 2.9L15.9 4.6Z" fill="#0b7dd4"/></svg>
<svg class="abs" style="left:365px;top:928.4px;" width="16" height="20" viewBox="0 0 16 20"><g fill="#0b7dd4"><rect x="0" y="2.1" width="16" height="3.1" rx="1.2"/><rect x="5.9" y="0.1" width="4.4" height="2.8" rx="1.3"/></g><path d="M2.1 5V17A2 2 0 0 0 4.1 19H11.9A2 2 0 0 0 13.9 17V5" fill="none" stroke="#0b7dd4" stroke-width="2"/><path d="M5.3 7.6V15.9M8.1 7.6V15.9M11 7.6V15.9" stroke="#1a8edc" stroke-width="1.3"/></svg>
<div class="t" style="left:415.00px;top:930.16px;font-size:16px;line-height:20px;color:#0a7bd5;text-decoration:underline">7</div>
<div class="t" style="left:494.40px;top:930.16px;font-size:16px;line-height:20px;">Sony Xperia 1 II</div>
<div class="t" style="left:714.60px;top:930.16px;font-size:16px;line-height:20px;">$1199.99</div>
<div class="t" style="left:801.80px;top:930.16px;font-size:16px;line-height:20px;">2022-07-01T10:00:01</div>
<div class="t" style="left:980.80px;top:930.16px;font-size:16px;line-height:20px;">Sony Xperia 1 II with 256GB Memory</div>
<div class="t" style="left:1356.80px;top:930.16px;font-size:16px;line-height:20px;">true</div>
<div class="badge" style="left:1540.2px;top:923.0px;width:52px"><span>NULL</span></div>
<div class="badge" style="left:1650.3px;top:923.0px;width:52px"><span>NULL</span></div>
<div class="badge" style="left:1798.5px;top:923.0px;width:52px"><span>NULL</span></div>
<div class="cb" style="left:283px;top:980.0px"></div>
<svg class="abs" style="left:335px;top:978.4px;" width="19" height="19" viewBox="0 0 19 19"><path d="M10.2 1.6H3.4A1.7 1.7 0 0 0 1.7 3.3V15.6A1.7 1.7 0 0 0 3.4 17.3H15.2A1.7 1.7 0 0 0 16.9 15.6V8.4" fill="none" stroke="#0b7dd4" stroke-width="1.7"/><path d="M3.9 14.1L5 10.7L12.7 3.4L14.9 5.6L7.4 13Z" fill="#0b7dd4"/><path d="M13.7 2.4L15.4 0.7L17.6 2.9L15.9 4.6Z" fill="#0b7dd4"/></svg>
<svg class="abs" style="left:365px;top:977.4px;" width="16" height="20" viewBox="0 0 16 20"><g fill="#0b7dd4"><rect x="0" y="2.1" width="16" height="3.1" rx="1.2"/><rect x="5.9" y="0.1" width="4.4" height="2.8" rx="1.3"/></g><path d="M2.1 5V17A2 2 0 0 0 4.1 19H11.9A2 2 0 0 0 13.9 17V5" fill="none" stroke="#0b7dd4" stroke-width="2"/><path d="M5.3 7.6V15.9M8.1 7.6V15.9M11 7.6V15.9" stroke="#1a8edc" stroke-width="1.3"/></svg>
<div class="t" style="left:415.00px;top:979.16px;font-size:16px;line-height:20px;color:#0a7bd5;text-decoration:underline">8</div>
<div class="t" style="left:494.40px;top:979.16px;font-size:16px;line-height:20px;">Nokia 8.3</div>
<div class="t" style="left:714.60px;top:979.16px;font-size:16px;line-height:20px;">$699.00</div>
<div class="t" style="left:801.80px;top:979.16px;font-size:16px;line-height:20px;">2022-07-01T10:00:01</div>
<div class="t" style="left:980.80px;top:979.16px;font-size:16px;line-height:20px;">Nokia 8.3 with 128GB Memory</div>
<div class="t" style="left:1356.80px;top:979.16px;font-size:16px;line-height:20px;">true</div>
<div class="badge" style="left:1540.2px;top:972.0px;width:52px"><span>NULL</span></div>
<div class="badge" style="left:1650.3px;top:972.0px;width:52px"><span>NULL</span></div>
<div class="badge" style="left:1798.5px;top:972.0px;width:52px"><span>NULL</span></div>
<div class="cb" style="left:283px;top:1029.0px"></div>
<svg class="abs" style="left:335px;top:1027.4px;" width="19" height="19" viewBox="0 0 19 19"><path d="M10.2 1.6H3.4A1.7 1.7 0 0 0 1.7 3.3V15.6A1.7 1.7 0 0 0 3.4 17.3H15.2A1.7 1.7 0 0 0 16.9 15.6V8.4" fill="none" stroke="#0b7dd4" stroke-width="1.7"/><path d="M3.9 14.1L5 10.7L12.7 3.4L14.9 5.6L7.4 13Z" fill="#0b7dd4"/><path d="M13.7 2.4L15.4 0.7L17.6 2.9L15.9 4.6Z" fill="#0b7dd4"/></svg>
<svg class="abs" style="left:365px;top:1026.4px;" width="16" height="20" viewBox="0 0 16 20"><g fill="#0b7dd4"><rect x="0" y="2.1" width="16" height="3.1" rx="1.2"/><rect x="5.9" y="0.1" width="4.4" height="2.8" rx="1.3"/></g><path d="M2.1 5V17A2 2 0 0 0 4.1 19H11.9A2 2 0 0 0 13.9 17V5" fill="none" stroke="#0b7dd4" stroke-width="2"/><path d="M5.3 7.6V15.9M8.1 7.6V15.9M11 7.6V15.9" stroke="#1a8edc" stroke-width="1.3"/></svg>
<div class="t" style="left:415.00px;top:1028.16px;font-size:16px;line-height:20px;color:#0a7bd5;text-decoration:underline">9</div>
<div class="t" style="left:494.40px;top:1028.16px;font-size:16px;line-height:20px;">Huawei P40 Pro</div>
<div class="t" style="left:714.60px;top:1028.16px;font-size:16px;line-height:20px;">$899.99</div>
<div class="badge" style="left:802.0px;top:1021.0px;width:52px"><span>NULL</span></div>
<div class="t" style="left:980.80px;top:1028.16px;font-size:16px;line-height:20px;">Huawei P40 Pro with 256GB Memory</div>
<div class="t" style="left:1356.80px;top:1028.16px;font-size:16px;line-height:20px;">false</div>
<div class="badge" style="left:1540.2px;top:1021.0px;width:52px"><span>NULL</span></div>
<div class="badge" style="left:1650.3px;top:1021.0px;width:52px"><span>NULL</span></div>
<div class="badge" style="left:1798.5px;top:1021.0px;width:52px"><span>NULL</span></div>
<div class="cb" style="left:283px;top:1078.0px"></div>
<svg class="abs" style="left:335px;top:1076.4px;" width="19" height="19" viewBox="0 0 19 19"><path d="M10.2 1.6H3.4A1.7 1.7 0 0 0 1.7 3.3V15.6A1.7 1.7 0 0 0 3.4 17.3H15.2A1.7 1.7 0 0 0 16.9 15.6V8.4" fill="none" stroke="#0b7dd4" stroke-width="1.7"/><path d="M3.9 14.1L5 10.7L12.7 3.4L14.9 5.6L7.4 13Z" fill="#0b7dd4"/><path d="M13.7 2.4L15.4 0.7L17.6 2.9L15.9 4.6Z" fill="#0b7dd4"/></svg>
<svg class="abs" style="left:365px;top:1075.4px;" width="16" height="20" viewBox="0 0 16 20"><g fill="#0b7dd4"><rect x="0" y="2.1" width="16" height="3.1" rx="1.2"/><rect x="5.9" y="0.1" width="4.4" height="2.8" rx="1.3"/></g><path d="M2.1 5V17A2 2 0 0 0 4.1 19H11.9A2 2 0 0 0 13.9 17V5" fill="none" stroke="#0b7dd4" stroke-width="2"/><path d="M5.3 7.6V15.9M8.1 7.6V15.9M11 7.6V15.9" stroke="#1a8edc" stroke-width="1.3"/></svg>
<div class="t" style="left:415.00px;top:1077.16px;font-size:16px;line-height:20px;color:#0a7bd5;text-decoration:underline">10</div>
<div class="t" style="left:494.40px;top:1077.16px;font-size:16px;line-height:20px;">Xiaomi Mi 10</div>
<div class="t" style="left:714.60px;top:1077.16px;font-size:16px;line-height:20px;">$699.99</div>
<div class="badge" style="left:802.0px;top:1070.0px;width:52px"><span>NULL</span></div>
<div class="t" style="left:980.80px;top:1077.16px;font-size:16px;line-height:20px;">Xiaomi Mi 10 with 128GB Memory</div>
<div class="t" style="left:1356.80px;top:1077.16px;font-size:16px;line-height:20px;">false</div>
<div class="badge" style="left:1540.2px;top:1070.0px;width:52px"><span>NULL</span></div>
<div class="badge" style="left:1650.3px;top:1070.0px;width:52px"><span>NULL</span></div>
<div class="badge" style="left:1798.5px;top:1070.0px;width:52px"><span>NULL</span></div>
<div class="cb" style="left:283px;top:1127.0px"></div>
<svg class="abs" style="left:335px;top:1125.4px;" width="19" height="19" viewBox="0 0 19 19"><path d="M10.2 1.6H3.4A1.7 1.7 0 0 0 1.7 3.3V15.6A1.7 1.7 0 0 0 3.4 17.3H15.2A1.7 1.7 0 0 0 16.9 15.6V8.4" fill="none" stroke="#0b7dd4" stroke-width="1.7"/><path d="M3.9 14.1L5 10.7L12.7 3.4L14.9 5.6L7.4 13Z" fill="#0b7dd4"/><path d="M13.7 2.4L15.4 0.7L17.6 2.9L15.9 4.6Z" fill="#0b7dd4"/></svg>
<svg class="abs" style="left:365px;top:1124.4px;" width="16" height="20" viewBox="0 0 16 20"><g fill="#0b7dd4"><rect x="0" y="2.1" width="16" height="3.1" rx="1.2"/><rect x="5.9" y="0.1" width="4.4" height="2.8" rx="1.3"/></g><path d="M2.1 5V17A2 2 0 0 0 4.1 19H11.9A2 2 0 0 0 13.9 17V5" fill="none" stroke="#0b7dd4" stroke-width="2"/><path d="M5.3 7.6V15.9M8.1 7.6V15.9M11 7.6V15.9" stroke="#1a8edc" stroke-width="1.3"/></svg>
<div class="t" style="left:415.00px;top:1126.16px;font-size:16px;line-height:20px;color:#0a7bd5;text-decoration:underline">11</div>
<div class="t" style="left:494.40px;top:1126.16px;font-size:16px;line-height:20px;">Oppo Find X2</div>
<div class="t" style="left:714.60px;top:1126.16px;font-size:16px;line-height:20px;">$999.99</div>
<div class="badge" style="left:802.0px;top:1119.0px;width:52px"><span>NULL</span></div>
<div class="t" style="left:980.80px;top:1126.16px;font-size:16px;line-height:20px;">Oppo Find X2 with 256GB Memory</div>
<div class="t" style="left:1356.80px;top:1126.16px;font-size:16px;line-height:20px;">false</div>
<div class="badge" style="left:1540.2px;top:1119.0px;width:52px"><span>NULL</span></div>
<div class="badge" style="left:1650.3px;top:1119.0px;width:52px"><span>NULL</span></div>
<div class="badge" style="left:1798.5px;top:1119.0px;width:52px"><span>NULL</span></div>
<div class="cb" style="left:283px;top:1176.0px"></div>
<svg class="abs" style="left:335px;top:1174.4px;" width="19" height="19" viewBox="0 0 19 19"><path d="M10.2 1.6H3.4A1.7 1.7 0 0 0 1.7 3.3V15.6A1.7 1.7 0 0 0 3.4 17.3H15.2A1.7 1.7 0 0 0 16.9 15.6V8.4" fill="none" stroke="#0b7dd4" stroke-width="1.7"/><path d="M3.9 14.1L5 10.7L12.7 3.4L14.9 5.6L7.4 13Z" fill="#0b7dd4"/><path d="M13.7 2.4L15.4 0.7L17.6 2.9L15.9 4.6Z" fill="#0b7dd4"/></svg>
<svg class="abs" style="left:365px;top:1173.4px;" width="16" height="20" viewBox="0 0 16 20"><g fill="#0b7dd4"><rect x="0" y="2.1" width="16" height="3.1" rx="1.2"/><rect x="5.9" y="0.1" width="4.4" height="2.8" rx="1.3"/></g><path d="M2.1 5V17A2 2 0 0 0 4.1 19H11.9A2 2 0 0 0 13.9 17V5" fill="none" stroke="#0b7dd4" stroke-width="2"/><path d="M5.3 7.6V15.9M8.1 7.6V15.9M11 7.6V15.9" stroke="#1a8edc" stroke-width="1.3"/></svg>
<div class="t" style="left:415.00px;top:1175.16px;font-size:16px;line-height:20px;color:#0a7bd5;text-decoration:underline">12</div>
<div class="t" style="left:494.40px;top:1175.16px;font-size:16px;line-height:20px;">Realme X50 Pro</div>
<div class="t" style="left:714.60px;top:1175.16px;font-size:16px;line-height:20px;">$599.99</div>
<div class="badge" style="left:802.0px;top:1168.0px;width:52px"><span>NULL</span></div>
<div class="t" style="left:980.80px;top:1175.16px;font-size:16px;line-height:20px;">Realme X50 Pro with 128GB Memory</div>
<div class="t" style="left:1356.80px;top:1175.16px;font-size:16px;line-height:20px;">false</div>
<div class="badge" style="left:1540.2px;top:1168.0px;width:52px"><span>NULL</span></div>
<div class="badge" style="left:1650.3px;top:1168.0px;width:52px"><span>NULL</span></div>
<div class="badge" style="left:1798.5px;top:1168.0px;width:52px"><span>NULL</span></div>
<div class="card" style="left:1963px;top:157px;width:547px;height:941.5px;box-shadow:0 10px 50px rgba(0,0,0,0.09)"></div>
<svg class="abs" style="left:1990px;top:185.5px;" width="25" height="25" viewBox="0 0 25 25"><path d="M1.2 1H23.7V4.8L15.3 13.5V22.6L9.5 24.3V13.5L1.2 4.8Z" fill="none" stroke="#1c1f23" stroke-width="1.6" stroke-linejoin="miter"/></svg>
<div class="t" style="left:2023.80px;top:182.16px;font-size:28.4px;line-height:34px;font-weight:bold;color:#1c1f23;letter-spacing:0.4px;transform:scaleY(1.05);transform-origin:0 26.84px">Filters</div>
<div class="abs" style="left:1988.3px;top:231.2px;width:496.5px;height:113.2px;border:1px solid #d3d3d3;border-radius:6px;background:#fff;overflow:hidden"><div class="abs" style="left:0;top:0;width:100%;height:42.8px;background:#f7f7f7;border-bottom:1px solid #d3d3d3"></div></div>
<svg class="abs" style="left:2009.6px;top:247.2px;" width="8" height="12" viewBox="0 0 8 12"><path d="M0.8 0.8L7 5.8L0.8 10.8Z" fill="none" stroke="#222" stroke-width="1.1" stroke-linejoin="round"/></svg>
<div class="t" style="left:2026.00px;top:244.06px;font-size:16px;line-height:20px;font-weight:bold;color:#222">name</div>
<div class="abs" style="left:2004px;top:290.4px;width:151px;height:38px;border:1px solid #ced4da;background:#fff"></div>
<div class="t" style="left:2013.80px;top:299.86px;font-size:16px;line-height:20px;color:#222">Contains</div>
<svg class="abs" style="left:2128px;top:306.2px;" width="12" height="8" viewBox="0 0 12 8"><path d="M1 1.2L6 6.2L11 1.2" fill="none" stroke="#343a40" stroke-width="1.6"/></svg>
<div class="abs" style="left:2154.5px;top:290.4px;width:264px;height:38px;border:1px solid #ced4da;border-left:none;background:#fff"></div>
<div class="t" style="left:2167.00px;top:299.86px;font-size:16px;line-height:20px;color:#7b8288">NULL</div>
<div class="abs" style="left:2418px;top:290.4px;width:42px;height:38px;background:#21a0ee"></div>
<svg class="abs" style="left:2429.7px;top:300.2px;" width="17" height="17" viewBox="0 0 17 17"><g fill="none" stroke="#fff" stroke-width="1.3" stroke-linecap="round"><circle cx="7.14" cy="7.14" r="6.12"/><path d="M11.56 11.56L16.05 16.05" stroke-width="1.625"/></g></svg>
<div class="abs" style="left:1988.3px;top:361.6px;width:496.5px;height:113.2px;border:1px solid #d3d3d3;border-radius:6px;background:#fff;overflow:hidden"><div class="abs" style="left:0;top:0;width:100%;height:42.8px;background:#f7f7f7;border-bottom:1px solid #d3d3d3"></div></div>
<svg class="abs" style="left:2009.6px;top:377.6px;" width="8" height="12" viewBox="0 0 8 12"><path d="M0.8 0.8L7 5.8L0.8 10.8Z" fill="none" stroke="#222" stroke-width="1.1" stroke-linejoin="round"/></svg>
<div class="t" style="left:2026.00px;top:374.46px;font-size:16px;line-height:20px;font-weight:bold;color:#222">price</div>
<div class="abs" style="left:2004px;top:420.8px;width:151px;height:38px;border:1px solid #ced4da;background:#fff"></div>
<div class="t" style="left:2013.80px;top:430.26px;font-size:16px;line-height:20px;color:#222">Greater than</div>
<svg class="abs" style="left:2128px;top:436.6px;" width="12" height="8" viewBox="0 0 12 8"><path d="M1 1.2L6 6.2L11 1.2" fill="none" stroke="#343a40" stroke-width="1.6"/></svg>
<div class="abs" style="left:2154.5px;top:420.8px;width:264px;height:38px;border:1px solid #ced4da;border-left:none;background:#fff"></div>
<div class="t" style="left:2167.00px;top:430.26px;font-size:16px;line-height:20px;color:#7b8288">NULL</div>
<div class="abs" style="left:2388px;top:430.8px;width:18px;height:18px;background:#e9e9e9;border-radius:2px"></div>
<svg class="abs" style="left:2392px;top:432.8px;" width="10" height="14" viewBox="0 0 10 14"><path d="M1.5 5L5 1.8L8.5 5M1.5 9L5 12.2L8.5 9" fill="none" stroke="#777" stroke-width="1.1"/></svg>
<div class="abs" style="left:2418px;top:420.8px;width:42px;height:38px;background:#21a0ee"></div>
<svg class="abs" style="left:2429.7px;top:430.6px;" width="17" height="17" viewBox="0 0 17 17"><g fill="none" stroke="#fff" stroke-width="1.3" stroke-linecap="round"><circle cx="7.14" cy="7.14" r="6.12"/><path d="M11.56 11.56L16.05 16.05" stroke-width="1.625"/></g></svg>
<div class="abs" style="left:1988.3px;top:492.0px;width:496.5px;height:113.2px;border:1px solid #d3d3d3;border-radius:6px;background:#fff;overflow:hidden"><div class="abs" style="left:0;top:0;width:100%;height:42.8px;background:#f7f7f7;border-bottom:1px solid #d3d3d3"></div></div>
<svg class="abs" style="left:2009.6px;top:508.0px;" width="8" height="12" viewBox="0 0 8 12"><path d="M0.8 0.8L7 5.8L0.8 10.8Z" fill="none" stroke="#222" stroke-width="1.1" stroke-linejoin="round"/></svg>
<div class="t" style="left:2026.00px;top:504.86px;font-size:16px;line-height:20px;font-weight:bold;color:#222">created_at</div>
<div class="abs" style="left:2004px;top:551.2px;width:151px;height:38px;border:1px solid #ced4da;background:#fff"></div>
<div class="t" style="left:2013.80px;top:560.66px;font-size:16px;line-height:20px;color:#222">After</div>
<svg class="abs" style="left:2128px;top:567.0px;" width="12" height="8" viewBox="0 0 12 8"><path d="M1 1.2L6 6.2L11 1.2" fill="none" stroke="#343a40" stroke-width="1.6"/></svg>
<div class="abs" style="left:2154.5px;top:551.2px;width:264px;height:38px;border:1px solid #ced4da;border-left:none;background:#fff"></div>
<div class="t" style="left:2170.00px;top:560.16px;font-size:16px;line-height:20px;color:#222">mm&thinsp;/&thinsp;dd&thinsp;/&thinsp;yyyy&thinsp;,</div>
<div class="t" style="left:2282.30px;top:560.16px;font-size:16px;line-height:20px;color:#222">--&thinsp;:&thinsp;--</div>
<div class="t" style="left:2324.30px;top:560.16px;font-size:16px;line-height:20px;color:#222">--</div>
<svg class="abs" style="left:2384.5px;top:560.8000000000001px;" width="17" height="17" viewBox="0 0 17 17"><g fill="none" stroke="#666" stroke-width="1.5"><rect x="1" y="3" width="15" height="13" rx="2.2"/></g><path d="M1 5.2A2.2 2.2 0 0 1 3.2 3H13.8A2.2 2.2 0 0 1 16 5.2V7H1Z" fill="#666"/><path d="M4.8 0.5V3.5M12.2 0.5V3.5" stroke="#666" stroke-width="1.5"/></svg>
<div class="abs" style="left:2418px;top:551.2px;width:42px;height:38px;background:#21a0ee"></div>
<svg class="abs" style="left:2429.7px;top:561.0px;" width="17" height="17" viewBox="0 0 17 17"><g fill="none" stroke="#fff" stroke-width="1.3" stroke-linecap="round"><circle cx="7.14" cy="7.14" r="6.12"/><path d="M11.56 11.56L16.05 16.05" stroke-width="1.625"/></g></svg>
<div class="abs" style="left:1988.3px;top:622.4px;width:496.5px;height:113.2px;border:1px solid #d3d3d3;border-radius:6px;background:#fff;overflow:hidden"><div class="abs" style="left:0;top:0;width:100%;height:42.8px;background:#f7f7f7;border-bottom:1px solid #d3d3d3"></div></div>
<svg class="abs" style="left:2009.6px;top:638.4px;" width="8" height="12" viewBox="0 0 8 12"><path d="M0.8 0.8L7 5.8L0.8 10.8Z" fill="none" stroke="#222" stroke-width="1.1" stroke-linejoin="round"/></svg>
<div class="t" style="left:2026.00px;top:635.26px;font-size:16px;line-height:20px;font-weight:bold;color:#222">description</div>
<div class="abs" style="left:2004px;top:681.6px;width:151px;height:38px;border:1px solid #ced4da;background:#fff"></div>
<div class="t" style="left:2013.80px;top:691.06px;font-size:16px;line-height:20px;color:#222">Contains</div>
<svg class="abs" style="left:2128px;top:697.4px;" width="12" height="8" viewBox="0 0 12 8"><path d="M1 1.2L6 6.2L11 1.2" fill="none" stroke="#343a40" stroke-width="1.6"/></svg>
<div class="abs" style="left:2154.5px;top:681.6px;width:264px;height:38px;border:1px solid #ced4da;border-left:none;background:#fff"></div>
<div class="t" style="left:2167.00px;top:691.06px;font-size:16px;line-height:20px;color:#7b8288">NULL</div>
<div class="abs" style="left:2418px;top:681.6px;width:42px;height:38px;background:#21a0ee"></div>
<svg class="abs" style="left:2429.7px;top:691.4px;" width="17" height="17" viewBox="0 0 17 17"><g fill="none" stroke="#fff" stroke-width="1.3" stroke-linecap="round"><circle cx="7.14" cy="7.14" r="6.12"/><path d="M11.56 11.56L16.05 16.05" stroke-width="1.625"/></g></svg>
<div class="abs" style="left:1988.3px;top:752.8px;width:496.5px;height:143.4px;border:1px solid #d3d3d3;border-radius:6px;background:#fff;overflow:hidden"><div class="abs" style="left:0;top:0;width:100%;height:42.8px;background:#f7f7f7;border-bottom:1px solid #d3d3d3"></div></div>
<svg class="abs" style="left:2009.6px;top:768.8px;" width="8" height="12" viewBox="0 0 8 12"><path d="M0.8 0.8L7 5.8L0.8 10.8Z" fill="none" stroke="#222" stroke-width="1.1" stroke-linejoin="round"/></svg>
<div class="t" style="left:2026.00px;top:765.66px;font-size:16px;line-height:20px;font-weight:bold;color:#222">eco_friendly</div>
<div class="t" style="left:2009.30px;top:815.06px;font-size:16px;line-height:20px;color:#0a7bd5;text-decoration:underline">false</div>
<div class="t" style="left:2009.30px;top:849.36px;font-size:16px;line-height:20px;color:#0a7bd5;text-decoration:underline">true</div>
<div class="abs" style="left:1988.3px;top:913.4px;width:496.5px;height:143.4px;border:1px solid #d3d3d3;border-radius:6px;background:#fff;overflow:hidden"><div class="abs" style="left:0;top:0;width:100%;height:42.8px;background:#f7f7f7;border-bottom:1px solid #d3d3d3"></div></div>
<svg class="abs" style="left:2009.6px;top:929.4px;" width="8" height="12" viewBox="0 0 8 12"><path d="M0.8 0.8L7 5.8L0.8 10.8Z" fill="none" stroke="#222" stroke-width="1.1" stroke-linejoin="round"/></svg>
<div class="t" style="left:2026.00px;top:926.26px;font-size:16px;line-height:20px;font-weight:bold;color:#222">status</div>
<div class="t" style="left:2009.30px;top:975.66px;font-size:16px;line-height:20px;color:#0a7bd5;text-decoration:underline">AVAILABLE</div>
<div class="t" style="left:2009.30px;top:1009.96px;font-size:16px;line-height:20px;color:#0a7bd5;text-decoration:underline">DISCONTINUED</div>
<div class="abs" style="left:2556px;top:0;width:3px;height:56px;background:rgba(0,0,0,0.1)"></div>
<div class="abs" style="left:2556px;top:56px;width:3px;height:417px;background:#8a8a8a;border-radius:0 0 2px 2px"></div>
<div id="side" class="abs">
<div id="menu" class="abs">MENU</div>
<div class="mi" style="top:31px"><div class="strip" style="background:#0a8ef0"></div>
<svg width="20" height="24" viewBox="0 0 20 24" style="left:17px;top:15.8px"><g fill="none" stroke="#0b7fd6" stroke-width="1.6"><ellipse cx="10" cy="4.2" rx="8.8" ry="3.4"/><path d="M1.2 4.2V19.8c0 1.9 3.9 3.4 8.8 3.4s8.8-1.5 8.8-3.4V4.2"/><path d="M1.2 9.4c0 1.9 3.9 3.4 8.8 3.4s8.8-1.5 8.8-3.4M1.2 14.6c0 1.9 3.9 3.4 8.8 3.4s8.8-1.5 8.8-3.4"/></g></svg>
<div class="lbl" style="top:17.6px">Entities</div></div>
<div class="mi" style="top:85.8px"><div class="strip"></div>
<svg width="20" height="26" viewBox="0 0 20 26" style="left:16px;top:13.5px"><g fill="none" stroke="#0b7fd6" stroke-width="1.7"><rect x="1" y="1" width="18" height="24" rx="3"/><path d="M4.5 7h11M4.5 10.3h11M4.5 13.6h11M4.5 16.9h6"/></g></svg>
<div class="lbl" style="top:17.5px">Logs</div></div>
<div class="mi" style="top:140px;background:#fff"><div class="strip" style="background:#7cc2f2"></div>
<svg width="26" height="23" viewBox="0 0 26 23" style="left:12.6px;top:15.6px"><g fill="none" stroke="#0b7fd6" stroke-width="1.7"><rect x="1.5" y="1.4" width="23.4" height="20.6" rx="2.6"/><path d="M5.3 5.3L9.6 8.9L5.3 12.5" stroke-width="1.5"/><path d="M10.3 13.1H16.2" stroke-width="1.7"/></g></svg>
<div class="lbl" style="top:18px">SQL Console</div></div>
<div class="mi" style="top:194.7px"><div class="strip"></div>
<svg width="25" height="25" viewBox="0 0 25 25" style="left:13.1px;top:13.9px"><path d="M12.50 0.40 L12.69 0.41 L12.88 0.43 L13.07 0.46 L13.25 0.51 L13.44 0.58 L13.62 0.68 L13.79 0.81 L13.96 0.97 L14.11 1.18 L14.25 1.43 L14.38 1.72 L14.50 2.04 L14.60 2.37 L14.69 2.69 L14.79 2.98 L14.88 3.23 L14.98 3.45 L15.08 3.63 L15.18 3.78 L15.30 3.90 L15.41 4.00 L15.53 4.08 L15.65 4.16 L15.78 4.22 L15.91 4.28 L16.04 4.33 L16.17 4.37 L16.31 4.40 L16.45 4.43 L16.61 4.44 L16.77 4.43 L16.95 4.40 L17.15 4.35 L17.37 4.27 L17.62 4.15 L17.89 4.01 L18.18 3.85 L18.49 3.69 L18.79 3.55 L19.09 3.43 L19.37 3.36 L19.62 3.32 L19.85 3.32 L20.07 3.35 L20.26 3.41 L20.44 3.49 L20.61 3.59 L20.77 3.69 L20.92 3.81 L21.06 3.94 L21.19 4.08 L21.31 4.23 L21.41 4.39 L21.51 4.56 L21.59 4.74 L21.65 4.93 L21.68 5.15 L21.68 5.38 L21.64 5.63 L21.57 5.91 L21.45 6.21 L21.31 6.51 L21.15 6.82 L20.99 7.11 L20.85 7.38 L20.73 7.63 L20.65 7.85 L20.60 8.05 L20.57 8.23 L20.56 8.39 L20.57 8.55 L20.60 8.69 L20.63 8.83 L20.67 8.96 L20.72 9.09 L20.78 9.22 L20.84 9.35 L20.92 9.47 L21.00 9.59 L21.10 9.70 L21.22 9.82 L21.37 9.92 L21.55 10.02 L21.77 10.12 L22.02 10.21 L22.31 10.31 L22.63 10.40 L22.96 10.50 L23.28 10.62 L23.57 10.75 L23.82 10.89 L24.03 11.04 L24.19 11.21 L24.32 11.38 L24.42 11.56 L24.49 11.75 L24.54 11.93 L24.57 12.12 L24.59 12.31 L24.60 12.50 L24.59 12.69 L24.57 12.88 L24.54 13.07 L24.49 13.25 L24.42 13.44 L24.32 13.62 L24.19 13.79 L24.03 13.96 L23.82 14.11 L23.57 14.25 L23.28 14.38 L22.96 14.50 L22.63 14.60 L22.31 14.69 L22.02 14.79 L21.77 14.88 L21.55 14.98 L21.37 15.08 L21.22 15.18 L21.10 15.30 L21.00 15.41 L20.92 15.53 L20.84 15.65 L20.78 15.78 L20.72 15.91 L20.67 16.04 L20.63 16.17 L20.60 16.31 L20.57 16.45 L20.56 16.61 L20.57 16.77 L20.60 16.95 L20.65 17.15 L20.73 17.37 L20.85 17.62 L20.99 17.89 L21.15 18.18 L21.31 18.49 L21.45 18.79 L21.57 19.09 L21.64 19.37 L21.68 19.62 L21.68 19.85 L21.65 20.07 L21.59 20.26 L21.51 20.44 L21.41 20.61 L21.31 20.77 L21.19 20.92 L21.06 21.06 L20.92 21.19 L20.77 21.31 L20.61 21.41 L20.44 21.51 L20.26 21.59 L20.07 21.65 L19.85 21.68 L19.62 21.68 L19.37 21.64 L19.09 21.57 L18.79 21.45 L18.49 21.31 L18.18 21.15 L17.89 20.99 L17.62 20.85 L17.37 20.73 L17.15 20.65 L16.95 20.60 L16.77 20.57 L16.61 20.56 L16.45 20.57 L16.31 20.60 L16.17 20.63 L16.04 20.67 L15.91 20.72 L15.78 20.78 L15.65 20.84 L15.53 20.92 L15.41 21.00 L15.30 21.10 L15.18 21.22 L15.08 21.37 L14.98 21.55 L14.88 21.77 L14.79 22.02 L14.69 22.31 L14.60 22.63 L14.50 22.96 L14.38 23.28 L14.25 23.57 L14.11 23.82 L13.96 24.03 L13.79 24.19 L13.62 24.32 L13.44 24.42 L13.25 24.49 L13.07 24.54 L12.88 24.57 L12.69 24.59 L12.50 24.60 L12.31 24.59 L12.12 24.57 L11.93 24.54 L11.75 24.49 L11.56 24.42 L11.38 24.32 L11.21 24.19 L11.04 24.03 L10.89 23.82 L10.75 23.57 L10.62 23.28 L10.50 22.96 L10.40 22.63 L10.31 22.31 L10.21 22.02 L10.12 21.77 L10.02 21.55 L9.92 21.37 L9.82 21.22 L9.70 21.10 L9.59 21.00 L9.47 20.92 L9.35 20.84 L9.22 20.78 L9.09 20.72 L8.96 20.67 L8.83 20.63 L8.69 20.60 L8.55 20.57 L8.39 20.56 L8.23 20.57 L8.05 20.60 L7.85 20.65 L7.63 20.73 L7.38 20.85 L7.11 20.99 L6.82 21.15 L6.51 21.31 L6.21 21.45 L5.91 21.57 L5.63 21.64 L5.38 21.68 L5.15 21.68 L4.93 21.65 L4.74 21.59 L4.56 21.51 L4.39 21.41 L4.23 21.31 L4.08 21.19 L3.94 21.06 L3.81 20.92 L3.69 20.77 L3.59 20.61 L3.49 20.44 L3.41 20.26 L3.35 20.07 L3.32 19.85 L3.32 19.62 L3.36 19.37 L3.43 19.09 L3.55 18.79 L3.69 18.49 L3.85 18.18 L4.01 17.89 L4.15 17.62 L4.27 17.37 L4.35 17.15 L4.40 16.95 L4.43 16.77 L4.44 16.61 L4.43 16.45 L4.40 16.31 L4.37 16.17 L4.33 16.04 L4.28 15.91 L4.22 15.78 L4.16 15.65 L4.08 15.53 L4.00 15.41 L3.90 15.30 L3.78 15.18 L3.63 15.08 L3.45 14.98 L3.23 14.88 L2.98 14.79 L2.69 14.69 L2.37 14.60 L2.04 14.50 L1.72 14.38 L1.43 14.25 L1.18 14.11 L0.97 13.96 L0.81 13.79 L0.68 13.62 L0.58 13.44 L0.51 13.25 L0.46 13.07 L0.43 12.88 L0.41 12.69 L0.40 12.50 L0.41 12.31 L0.43 12.12 L0.46 11.93 L0.51 11.75 L0.58 11.56 L0.68 11.38 L0.81 11.21 L0.97 11.04 L1.18 10.89 L1.43 10.75 L1.72 10.62 L2.04 10.50 L2.37 10.40 L2.69 10.31 L2.98 10.21 L3.23 10.12 L3.45 10.02 L3.63 9.92 L3.78 9.82 L3.90 9.70 L4.00 9.59 L4.08 9.47 L4.16 9.35 L4.22 9.22 L4.28 9.09 L4.33 8.96 L4.37 8.83 L4.40 8.69 L4.43 8.55 L4.44 8.39 L4.43 8.23 L4.40 8.05 L4.35 7.85 L4.27 7.63 L4.15 7.38 L4.01 7.11 L3.85 6.82 L3.69 6.51 L3.55 6.21 L3.43 5.91 L3.36 5.63 L3.32 5.38 L3.32 5.15 L3.35 4.93 L3.41 4.74 L3.49 4.56 L3.59 4.39 L3.69 4.23 L3.81 4.08 L3.94 3.94 L4.08 3.81 L4.23 3.69 L4.39 3.59 L4.56 3.49 L4.74 3.41 L4.93 3.35 L5.15 3.32 L5.38 3.32 L5.63 3.36 L5.91 3.43 L6.21 3.55 L6.51 3.69 L6.82 3.85 L7.11 4.01 L7.38 4.15 L7.63 4.27 L7.85 4.35 L8.05 4.40 L8.23 4.43 L8.39 4.44 L8.55 4.43 L8.69 4.40 L8.83 4.37 L8.96 4.33 L9.09 4.28 L9.22 4.22 L9.35 4.16 L9.47 4.08 L9.59 4.00 L9.70 3.90 L9.82 3.78 L9.92 3.63 L10.02 3.45 L10.12 3.23 L10.21 2.98 L10.31 2.69 L10.40 2.37 L10.50 2.04 L10.62 1.72 L10.75 1.43 L10.89 1.18 L11.04 0.97 L11.21 0.81 L11.38 0.68 L11.56 0.58 L11.75 0.51 L11.93 0.46 L12.12 0.43 L12.31 0.41Z" fill="none" stroke="#0b7fd6" stroke-width="1.6" stroke-linejoin="round"/><circle cx="12.5" cy="12.5" r="4.3" fill="none" stroke="#0b7fd6" stroke-width="1.6"/></svg>
<div class="lbl" style="top:17.4px">Settings</div></div>
<div class="abs" style="left:0;top:1140px;width:200px;height:1px;background:#cdcdcd"></div>
<div class="abs" style="left:0;top:1141px;width:5px;height:13px;background:#f1f1f1"></div>
</div>


</body></html>
